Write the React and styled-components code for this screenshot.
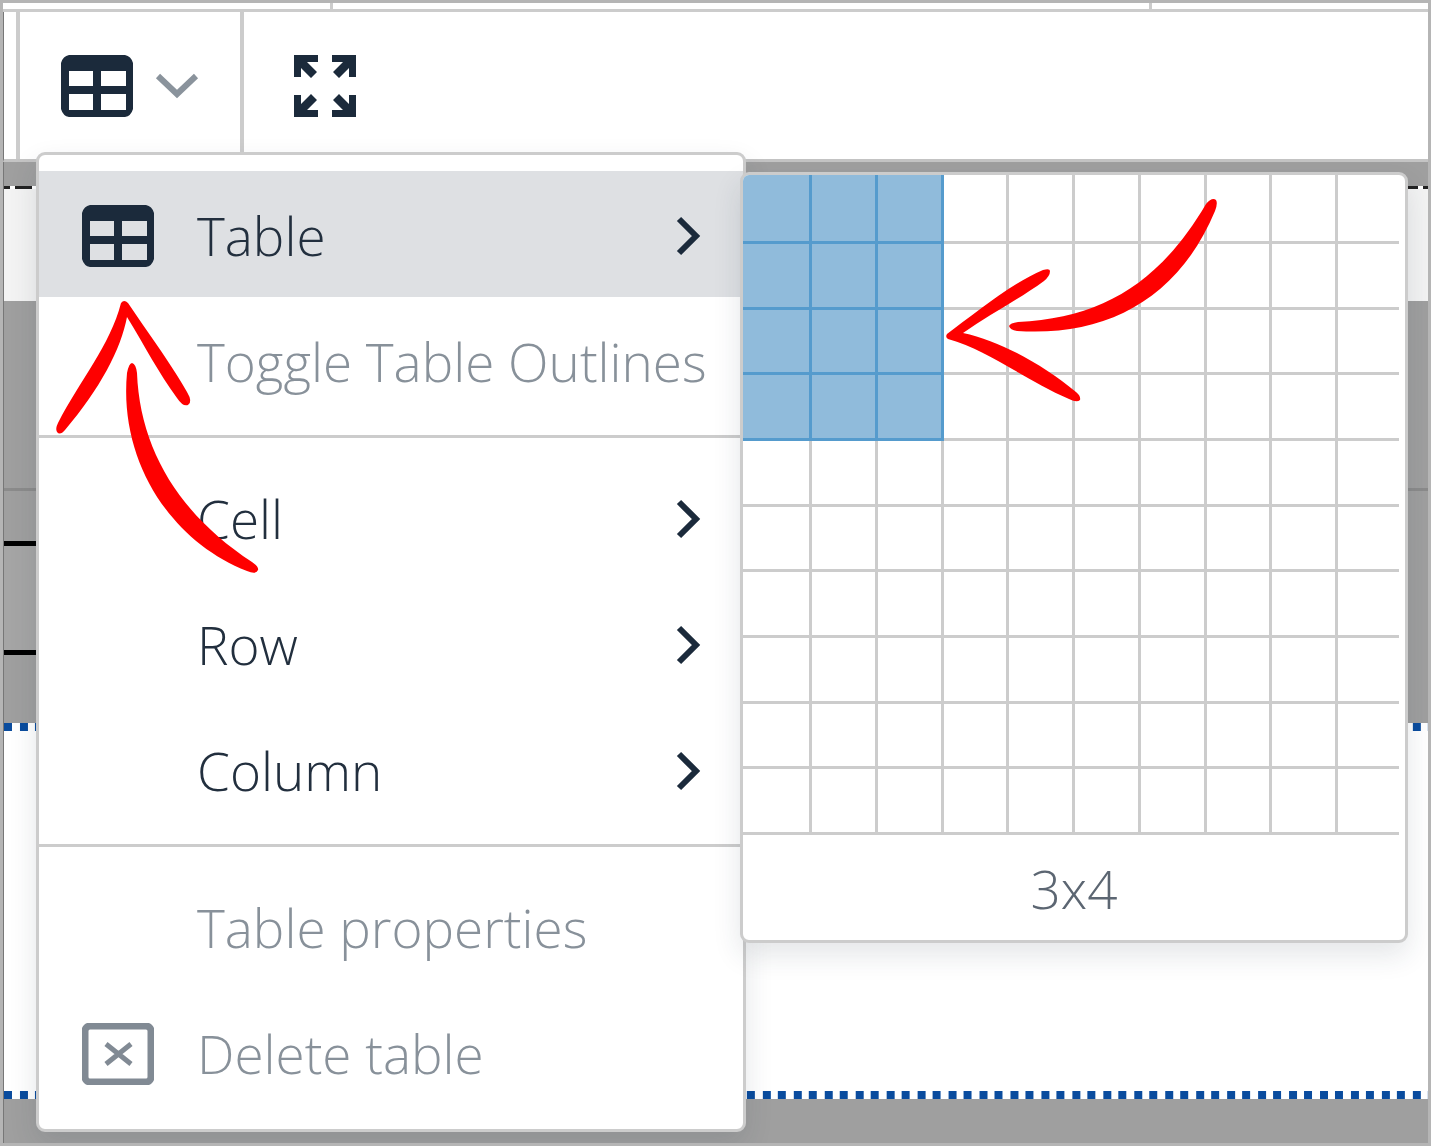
import { useState } from "react";
import styled, { createGlobalStyle } from "styled-components";

const COLS = 10;
const ROWS = 10;

const groups = [
  [
    { name: "Table", icon: "table", sub: true, active: true },
    { name: "Toggle Table Outlines", disabled: true },
  ],
  [
    { name: "Cell", sub: true },
    { name: "Row", sub: true },
    { name: "Column", sub: true },
  ],
  [
    { name: "Table properties", disabled: true },
    { name: "Delete table", icon: "delete", disabled: true },
  ],
];

const TableIcon = () => (
  <svg width="72" height="62" viewBox="0 0 72 62" aria-hidden="true">
    <path
      fill="#1b2a3b"
      fillRule="evenodd"
      d="M8 0H64Q70 1 72 8V54Q70 61 64 62H8Q2 61 0 54V8Q2 1 8 0ZM8 16V31H32V16ZM40 16V31H65V16ZM8 39V55H32V39ZM40 39V55H65V39Z"
    />
  </svg>
);

const DeleteIcon = () => (
  <svg width="72" height="62" viewBox="0 0 72 62" aria-hidden="true">
    <g fill="none" stroke="#818a94">
      <rect x="3" y="3" width="66" height="56" rx="5" strokeWidth="7" />
      <path d="M24 21L49 41M49 21L24 41" strokeWidth="5" />
    </g>
  </svg>
);

const ChevronDown = () => (
  <svg width="44" height="26" viewBox="0 0 44 26" aria-hidden="true">
    <path d="M3 3L22 21L41 3" fill="none" stroke="#8a939c" strokeWidth="6" />
  </svg>
);

const ChevronRight = () => (
  <svg width="26" height="42" viewBox="0 0 26 42" aria-hidden="true">
    <path d="M4 4L21 21L4 38" fill="none" stroke="#1b2a3b" strokeWidth="6" />
  </svg>
);

const FullscreenIcon = () => (
  <svg width="62" height="62" viewBox="0 0 62 62" aria-hidden="true">
    <defs>
      <path id="corner" d="M0 0H24V7H13L23 17L17 23L7 13V22H0Z" />
    </defs>
    <g fill="#1b2a3b">
      <use href="#corner" />
      <use href="#corner" transform="translate(62 0) scale(-1 1)" />
      <use href="#corner" transform="translate(0 62) scale(1 -1)" />
      <use href="#corner" transform="translate(62 62) scale(-1 -1)" />
    </g>
  </svg>
);

const icons = { table: <TableIcon />, delete: <DeleteIcon /> };

const App = () => {
  const [size, setSize] = useState({ cols: 3, rows: 4 });

  return (
    <>
      <GlobalStyle />
      <Editor>
        <MenuBar>
          <MenuBarPart w="330px" />
          <MenuBarPart w="819px" />
          <MenuBarPart />
        </MenuBar>
        <Toolbar>
          <ToolGroup w="16px" />
          <ToolGroup w="224px">
            <ToolButton aria-label="Table" aria-haspopup="menu">
              <TableIcon />
              <ChevronDown />
            </ToolButton>
          </ToolGroup>
          <ToolGroup last>
            <ToolButton aria-label="Fullscreen">
              <FullscreenIcon />
            </ToolButton>
          </ToolGroup>
        </Toolbar>

        <Canvas>
          <Shade h="24px" />
          <HeadingBlock />
          <Shade h="187px" />
          <Rule />
          <Shade h="232px">
            <Ruler />
          </Shade>
          <TextBlock />
          <Shade grow />
        </Canvas>

        <Menu role="menu" aria-label="Table">
          {groups.map((group, key) => {
            return (
              <Group key={key} role="group">
                {group.map((item) => {
                  return (
                    <Item
                      key={item.name}
                      role="menuitem"
                      disabled={item.disabled}
                      $active={item.active}
                    >
                      <IconBox>{icons[item.icon]}</IconBox>
                      <Name>{item.name}</Name>
                      {item.sub && <ChevronRight />}
                    </Item>
                  );
                })}
              </Group>
            );
          })}
          <SubMenu>
            <Picker>
              {Array.from({ length: COLS * ROWS }, (_, i) => {
                const col = (i % COLS) + 1;
                const row = Math.floor(i / COLS) + 1;
                return (
                  <Cell
                    key={i}
                    aria-label={`${col} by ${row}`}
                    $on={col <= size.cols && row <= size.rows}
                    $end={col === COLS}
                    onClick={() => setSize({ cols: col, rows: row })}
                  />
                );
              })}
            </Picker>
            <SizeText>
              {size.cols}x{size.rows}
            </SizeText>
          </SubMenu>
        </Menu>

        <Arrows width="1431" height="600" viewBox="0 0 1431 600">
          <path d="M121 303Q124 299 128 303L143 325C160 349 175 371 187 392Q193 402 188 405Q183 407 177 398C158 372 146 348 127 317C121 349 100 389 65 430Q60 436 57 432Q55 429 58 423C80 380 110 346 121 303Z" />
          <path d="M127 373Q129 363 132 363Q136 364 137 373C140 450 180 515 252 562Q259 567 258 570Q256 575 247 571C168 540 119 458 127 373Z" />
          <path d="M947 334C973 315 1010 284 1043 270Q1050 268 1050 271Q1050 276 1044 281C1018 300 990 314 963 333C1001 341 1043 365 1076 392Q1081 396 1080 400Q1077 403 1069 399C1025 380 988 350 948 339Q945 337 947 334Z" />
          <path d="M1009 326Q1010 323 1018 322C1103 318 1160 282 1206 204Q1212 197 1216 200Q1218 203 1215 211C1178 300 1105 337 1017 331Q1010 330 1009 326Z" />
        </Arrows>
      </Editor>
    </>
  );
};

export default App;

const GlobalStyle = createGlobalStyle`
  * {
    box-sizing: border-box;
  }
  body {
    margin: 0;
    font-family: "Open Sans", "Noto Sans", sans-serif;
  }
  button {
    border: 0;
    padding: 0;
    background: none;
    font: inherit;
    cursor: pointer;
  }
`;
const Editor = styled.div`
  position: relative;
  min-height: 100vh;
  display: flex;
  flex-direction: column;
  overflow: hidden;
  border: 3px solid #b5b5b5;
  background: #fff;
`;
const MenuBar = styled.div`
  display: flex;
  height: 9px;
  border-bottom: 3px solid #ccc;
`;
const MenuBarPart = styled.div`
  width: ${(props) => props.w || "auto"};
  border-right: ${(props) => (props.w ? "3px solid #ccc" : "0")};
`;
const Toolbar = styled.div`
  display: flex;
  height: 150px;
  border-bottom: 3px solid #c4c4c4;
  border-left: 1px solid #777;
`;
const ToolGroup = styled.div`
  width: ${(props) => props.w || "auto"};
  display: flex;
  align-items: center;
  padding-left: ${(props) => (props.last ? "50px" : "0")};
  border-right: ${(props) => (props.last ? "0" : "4px solid #ccc")};
`;
const ToolButton = styled.button`
  display: flex;
  flex: 1;
  align-items: center;
  justify-content: center;
  gap: 22px;
`;
const Canvas = styled.div`
  flex: 1;
  display: flex;
  flex-direction: column;
  border-left: 1px solid #777;
`;
const Shade = styled.div`
  height: ${(props) => props.h || "auto"};
  flex: ${(props) => (props.grow ? "1" : "none")};
  background: #9f9f9f;
`;
const HeadingBlock = styled.div`
  height: 115px;
  background:
    repeating-linear-gradient(90deg, #222 0 6px, #fff 6px 11px, #222 11px 22px)
      top / 100% 3px no-repeat,
    #f3f3f3;
`;
const Rule = styled.div`
  height: 3px;
  background: #8b8b8b;
`;
const Ruler = styled.div`
  width: 40px;
  height: 114px;
  background: #a5a5a5;
  border: solid #000;
  border-width: 5px 0;
  margin-top: 50px;
`;
const TextBlock = styled.div`
  height: 376px;
  background:
    linear-gradient(90deg, #0a4c9e 8px, #fff 8px 16px, #0a4c9e 16px 24px, #fff 24px)
      top left / 31px 8px round no-repeat,
    linear-gradient(90deg, #0a4c9e 8px, #fff 8px 16px, #0a4c9e 16px 24px, #fff 24px)
      bottom left / 31px 8px round no-repeat,
    #fff;
`;
const Menu = styled.div`
  position: absolute;
  top: 149px;
  left: 33px;
  width: 710px;
  padding-bottom: 2px;
  border: 3px solid #ccc;
  border-radius: 9px;
  background: #fff;
  box-shadow: 0 12px 28px rgba(34, 47, 62, 0.12);
`;
const Group = styled.div`
  padding: 16px 0 12px;
  & + & {
    border-top: 3px solid #ccc;
  }
`;
const Item = styled.button`
  width: 100%;
  height: 126px;
  display: flex;
  align-items: center;
  padding: 4px 42px 0 43px;
  font-size: 53px;
  font-weight: 300;
  line-height: 72px;
  text-align: left;
  color: ${(props) => (props.disabled ? "#88919a" : "#222f3e")};
  background: ${(props) => (props.$active ? "#dee0e3" : "transparent")};
`;
const IconBox = styled.span`
  width: 72px;
  flex: none;
  display: flex;
  margin-right: 43px;
`;
const Name = styled.span`
  flex: 1;
  white-space: nowrap;
`;
const SubMenu = styled.div`
  position: absolute;
  top: 17px;
  left: 701px;
  width: 668px;
  border: 3px solid #ccc;
  border-radius: 9px;
  overflow: hidden;
  background: #fff;
  box-shadow: 0 12px 28px rgba(34, 47, 62, 0.12);
`;
const Picker = styled.div`
  height: 660px;
  margin-right: 6px;
  display: grid;
  grid-template-columns: 69px repeat(8, 1fr) 61px;
  grid-template-rows: 69px repeat(9, 1fr);
`;
const Cell = styled.button`
  && {
    border: solid ${(props) => (props.$on ? "#559bcd" : "#ccc")};
    border-width: ${(props) => (props.$end ? "0 0 3px" : "0 3px 3px 0")};
    background: ${(props) => (props.$on ? "#90bbdb" : "#fff")};
  }
`;
const SizeText = styled.div`
  padding: 18px 0 15px;
  text-align: center;
  font-size: 53px;
  font-weight: 300;
  line-height: 72px;
  color: #5c6672;
`;
const Arrows = styled.svg`
  position: absolute;
  top: -3px;
  left: -3px;
  fill: #fe0000;
  pointer-events: none;
`;
